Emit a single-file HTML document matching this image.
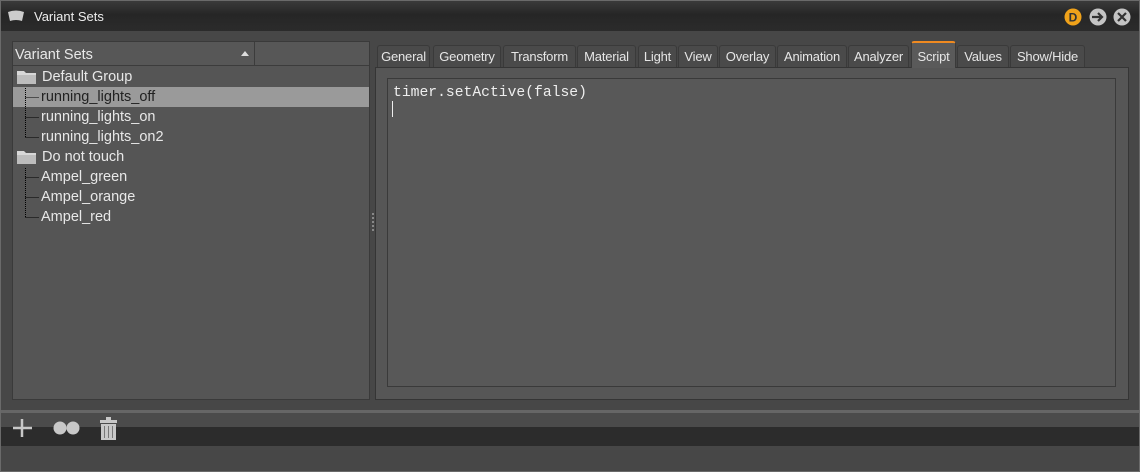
<!DOCTYPE html>
<html><head><style>
*{margin:0;padding:0;box-sizing:border-box}
body{width:1140px;height:472px;background:#474747;font-family:"Liberation Sans",sans-serif;position:relative;overflow:hidden;color:#e8e8e8}
.a{position:absolute}
#title{left:0;top:0;width:1140px;height:31px;background:linear-gradient(#3a3a3a,#262626 45%,#2b2b2b);border:1px solid #6a6a6a;border-bottom:none}
#title span{position:absolute;left:33px;top:8px;font-size:13px;color:#eee}
#left{left:12px;top:41px;width:358px;height:359px;background:#555;border:1px solid #3a3a3a}
#hdr{left:0;top:0;width:356px;height:24px;background:#575757;border-bottom:1px solid #3c3c3c}
#hdr span{position:absolute;left:2px;top:5px;font-size:14.5px}
.row{position:absolute;left:0;width:356px;height:20px;font-size:14.5px}
.row span{position:absolute;top:2px}
.sel{background:#9a9a9a;color:#222}
.tab{position:absolute;top:45px;height:22px;background:#4a4a4a;border:1px solid #3a3a3a;border-bottom:none;font-size:13px;text-align:center;line-height:21px;color:#e6e6e6;border-radius:3px 3px 0 0;letter-spacing:-0.2px}
#pane{left:375px;top:67px;width:754px;height:333px;background:#565656;border:1px solid #353535}
#ed{left:387px;top:78px;width:729px;height:309px;background:#585858;border:1px solid #3a3a3a}
#ed span{position:absolute;left:5px;top:6px;font-family:"Liberation Mono",monospace;font-size:14.7px;color:#eee}
</style></head><body>
<div id="title" class="a">
<svg class="a" style="left:6px;top:9px" width="18" height="12"><path d="M1 2 Q9 -1 17 2 L15 11 Q9 9 3 11 Z" fill="#ccc"/></svg>
<span>Variant Sets</span>
<svg class="a" style="left:1062px;top:6px" width="70" height="20">
<circle cx="10" cy="10" r="8.5" fill="#f0a21a"/><text x="10" y="14.5" font-size="12" font-weight="bold" text-anchor="middle" fill="#333" font-family="Liberation Sans">D</text>
<circle cx="35" cy="10" r="8.5" fill="#c4c4c4"/><path d="M29 10h10M35 6l4 4-4 4" stroke="#333" stroke-width="2.2" fill="none"/>
<circle cx="59" cy="10" r="8.5" fill="#c4c4c4"/><path d="M55 6l8 8M63 6l-8 8" stroke="#333" stroke-width="2.2"/>
</svg>
</div>
<div id="left" class="a">
<div id="hdr" class="a"><span>Variant Sets</span>
<svg class="a" style="left:228px;top:9px" width="8" height="5"><path d="M0 5L4 0L8 5Z" fill="#ddd"/></svg>
<div class="a" style="left:241px;top:0;width:1px;height:24px;background:#3c3c3c"></div></div>
<div class="row" style="top:25px"><svg class="a" style="left:3px;top:1px" width="22" height="18"><path d="M1 3h7l2 2h10v11H1z" fill="#d8d8d8"/><path d="M1 7h19v9H1z" fill="#bdbdbd"/></svg><span style="left:29px">Default Group</span></div>
<div class="row sel" style="top:45px"><span style="left:28px">running_lights_off</span></div>
<div class="row" style="top:65px"><span style="left:28px">running_lights_on</span></div>
<div class="row" style="top:85px"><span style="left:28px">running_lights_on2</span></div>
<div class="row" style="top:105px"><svg class="a" style="left:3px;top:1px" width="22" height="18"><path d="M1 3h7l2 2h10v11H1z" fill="#d8d8d8"/><path d="M1 7h19v9H1z" fill="#bdbdbd"/></svg><span style="left:29px">Do not touch</span></div>
<div class="row" style="top:125px"><span style="left:28px">Ampel_green</span></div>
<div class="row" style="top:145px"><span style="left:28px">Ampel_orange</span></div>
<div class="row" style="top:165px"><span style="left:28px">Ampel_red</span></div>
<svg class="a" style="left:12px;top:45px" width="16" height="170">
<path d="M0.5 1V51M0.5 10.5H14M0.5 30.5H14M0.5 50.5H14M0.5 81V131M0.5 90.5H14M0.5 110.5H14M0.5 130.5H14" stroke="#000" stroke-dasharray="1 1" fill="none"/></svg>
</div>
<div class="a" style="left:372px;top:213px;width:2px;height:18px;border-left:2px dotted #888"></div>
<div id="pane" class="a"></div>
<div class="tab" style="left:377px;width:53px">General</div>
<div class="tab" style="left:433px;width:68px">Geometry</div>
<div class="tab" style="left:503px;width:73px">Transform</div>
<div class="tab" style="left:577px;width:59px">Material</div>
<div class="tab" style="left:638px;width:39px">Light</div>
<div class="tab" style="left:678px;width:40px">View</div>
<div class="tab" style="left:719px;width:57px">Overlay</div>
<div class="tab" style="left:777px;width:70px">Animation</div>
<div class="tab" style="left:848px;width:61px">Analyzer</div>
<div class="tab" style="left:911px;width:45px;top:41px;height:27px;line-height:27px;background:#5a5a5a;border-top:2px solid #f08a20;border-color:#f08a20 #3a3a3a #3a3a3a">Script</div>
<div class="tab" style="left:957px;width:52px">Values</div>
<div class="tab" style="left:1010px;width:75px">Show/Hide</div>
<div id="ed" class="a"><span>timer.setActive(false)</span><div class="a" style="left:4px;top:22px;width:1px;height:16px;background:#eee"></div></div>
<div class="a" style="left:0;top:410px;width:1140px;height:3px;background:#666"></div>
<div class="a" style="left:0;top:413px;width:1140px;height:14px;background:#4b4b4b"></div>
<div class="a" style="left:0;top:427px;width:1140px;height:19px;background:#2c2c2c"></div>
<svg class="a" style="left:10px;top:416px" width="110" height="26">
<path d="M12 3V21M3 12H22" stroke="#c8c8c8" stroke-width="2.5"/>
<circle cx="50" cy="12" r="6.5" fill="#c8c8c8"/><circle cx="63" cy="12" r="6.5" fill="#c8c8c8"/>
<path d="M90 4h17v3H90zM96 1h5v3h-5z" fill="#c8c8c8"/><path d="M91 8h15v16H91z" fill="#c8c8c8"/><path d="M94.5 10v12M98.5 10v12M102.5 10v12" stroke="#777"/>
</svg>
<div class="a" style="left:0;top:0;width:1140px;height:472px;border:1px solid #6a6a6a;border-top:none"></div>
</body></html>
